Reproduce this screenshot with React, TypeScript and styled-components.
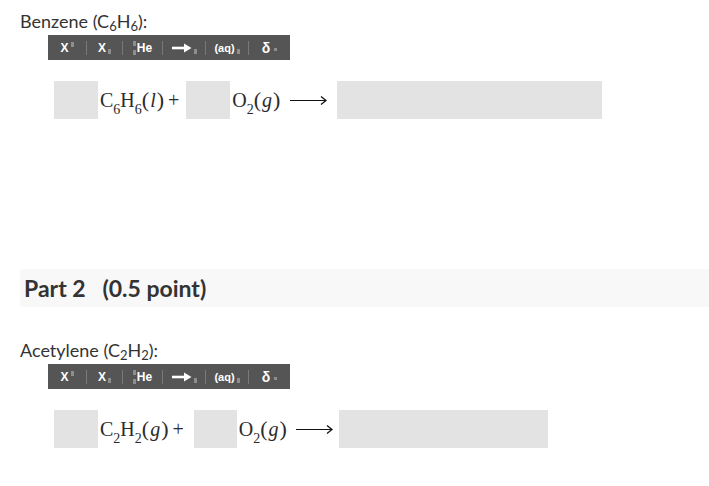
import React from "react";
import styled, { createGlobalStyle } from "styled-components";

const GlobalStyle = createGlobalStyle`
  html, body {
    margin: 0;
    padding: 0;
    background: #fff;
  }
  body {
    font-family: Lato, "Noto Sans", sans-serif;
    color: #333;
  }
`;

const Page = styled.div`
  width: 709px;
  padding-left: 20px;
  box-sizing: border-box;
  display: flex;
  flex-direction: column;
`;

const Title = styled.div<{ $top: number }>`
  margin-top: ${(p) => p.$top}px;
  font-size: 18px;
  line-height: 20px;
  color: #333;
`;

const TitleSub = styled.sub`
  font-size: 13px;
  vertical-align: -3px;
  line-height: 0;
`;

const Toolbar = styled.div`
  margin-top: 4px;
  margin-left: 28px;
  width: 242px;
  height: 25px;
  background: #555555;
  display: flex;
  align-items: center;
`;

const Tool = styled.div<{ $w: number }>`
  width: ${(p) => p.$w}px;
  height: 100%;
  display: flex;
  align-items: center;
  justify-content: center;
  font-family: "Liberation Sans", Arial, sans-serif;
  font-weight: bold;
  font-size: 12px;
  color: #fff;
`;

const Sep = styled.div`
  width: 1px;
  height: 14px;
  background: #7a7a7a;
`;

const Slot = styled.span<{ $pos: "top" | "bottom" | "mid" }>`
  display: inline-block;
  width: 3px;
  height: ${(p) => (p.$pos === "mid" ? "3px" : "5px")};
  background: #8e8e8e;
  margin-left: ${(p) => (p.$pos === "mid" ? "4px" : "2px")};
  align-self: ${(p) => (p.$pos === "top" ? "flex-start" : "flex-end")};
  margin-top: ${(p) => (p.$pos === "top" ? "7px" : "0")};
  margin-bottom: ${(p) => (p.$pos === "bottom" ? "6px" : p.$pos === "mid" ? "9px" : "0")};
`;

const SlotStack = styled.span`
  display: inline-flex;
  flex-direction: column;
  justify-content: space-between;
  height: 14px;
  margin-right: 1px;
`;

const MiniSlot = styled.span`
  display: block;
  width: 3px;
  height: 5px;
  background: #8e8e8e;
`;

const Equation = styled.div`
  margin-top: 21px;
  margin-left: 34px;
  height: 38px;
  display: flex;
  align-items: center;
`;

const Blank = styled.div<{ $w: number }>`
  width: ${(p) => p.$w}px;
  height: 38px;
  background: #e3e3e3;
  flex-shrink: 0;
`;

const Formula = styled.div<{ $after: number }>`
  font-family: "Liberation Serif", "Times New Roman", serif;
  font-size: 20px;
  color: #2b2b2b;
  padding-left: 2px;
  margin-right: ${(p) => p.$after}px;
  white-space: nowrap;
  line-height: 38px;
`;

const Sub = styled.span`
  font-size: 14px;
  vertical-align: -7px;
  line-height: 0;
`;

const Paren = styled.span`
  font-size: 22px;
`;

const Ital = styled.i`
  font-style: italic;
  padding: 0 1px;
`;

const Plus = styled.span`
  margin-left: 4px;
`;

const Band = styled.div`
  margin-top: 150px;
  height: 38px;
  background: #f8f8f8;
  display: flex;
  align-items: center;
  padding-left: 4px;
  font-weight: bold;
  font-size: 23px;
  color: #333;
  white-space: pre;
`;

const ArrowBox = styled.div<{ $after: number }>`
  display: flex;
  align-items: center;
  margin-right: ${(p) => p.$after}px;
`;

const LongArrow = ({ after }: { after: number }) => (
  <ArrowBox $after={after}>
    <svg width="37" height="12" viewBox="0 0 37 12">
      <line x1="0" y1="6.5" x2="35" y2="6.5" stroke="#111" strokeWidth="1.2" />
      <path d="M31 2.5 L36 6.5 L31 10.5" fill="none" stroke="#111" strokeWidth="1.3" />
    </svg>
  </ArrowBox>
);

const ToolArrow = () => (
  <svg width="20" height="10" viewBox="0 0 20 10">
    <line x1="0" y1="5" x2="14" y2="5" stroke="#fff" strokeWidth="2.6" />
    <path d="M12 0.5 L19.5 5 L12 9.5 Z" fill="#fff" />
  </svg>
);

const ToolRow = () => (
  <Toolbar>
    <Tool $w={38}>
      X<Slot $pos="top" />
    </Tool>
    <Sep />
    <Tool $w={35}>
      X<Slot $pos="bottom" />
    </Tool>
    <Sep />
    <Tool $w={39}>
      <SlotStack>
        <MiniSlot />
        <MiniSlot />
      </SlotStack>
      He
    </Tool>
    <Sep />
    <Tool $w={42}>
      <ToolArrow />
      <Slot $pos="bottom" />
    </Tool>
    <Sep />
    <Tool $w={42}>
      <span style={{ fontSize: 11 }}>(aq)</span>
      <Slot $pos="bottom" />
    </Tool>
    <Sep />
    <Tool $w={41}>
      <span style={{ fontSize: 14 }}>δ</span>
      <Slot $pos="mid" />
    </Tool>
  </Toolbar>
);

export default function App() {
  return (
    <Page>
      <GlobalStyle />
      <Title $top={11}>
        Benzene (C<TitleSub>6</TitleSub>H<TitleSub>6</TitleSub>):
      </Title>
      <ToolRow />
      <Equation>
        <Blank $w={44} />
        <Formula $after={7}>
          C<Sub>6</Sub>H<Sub>6</Sub>
          <Paren>(</Paren>
          <Ital>l</Ital>
          <Paren>)</Paren>
          <Plus>+</Plus>
        </Formula>
        <Blank $w={44} />
        <Formula $after={10}>
          O<Sub>2</Sub>
          <Paren>(</Paren>
          <Ital>g</Ital>
          <Paren>)</Paren>
        </Formula>
        <LongArrow after={10} />
        <Blank $w={265} />
      </Equation>

      <Band>{"Part 2   (0.5 point)"}</Band>

      <Title $top={33}>
        Acetylene (C<TitleSub>2</TitleSub>H<TitleSub>2</TitleSub>):
      </Title>
      <ToolRow />
      <Equation>
        <Blank $w={44} />
        <Formula $after={10}>
          C<Sub>2</Sub>H<Sub>2</Sub>
          <Paren>(</Paren>
          <Ital>g</Ital>
          <Paren>)</Paren>
          <Plus>+</Plus>
        </Formula>
        <Blank $w={43} />
        <Formula $after={9}>
          O<Sub>2</Sub>
          <Paren>(</Paren>
          <Ital>g</Ital>
          <Paren>)</Paren>
        </Formula>
        <LongArrow after={6} />
        <Blank $w={209} />
      </Equation>
    </Page>
  );
}
